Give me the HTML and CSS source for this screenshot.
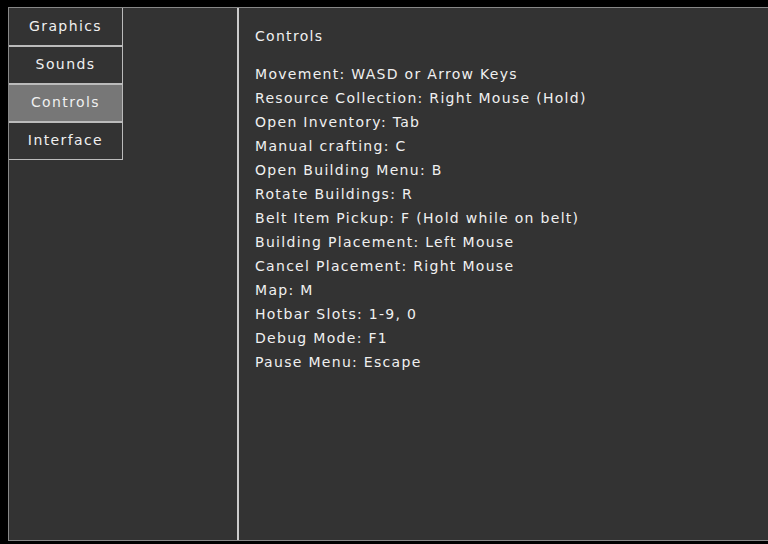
FILE: index.html
```html
<!DOCTYPE html>
<html lang="en">
<head>
    <meta charset="UTF-8">
    <meta name="viewport" content="width=device-width, initial-scale=1.0">
    <title>Settings</title>
    <link rel="stylesheet" href="styles.css">
</head>
<body>
    <div class="settings">
        <div class="tabs">
            <button class="tab">Graphics</button>
            <button class="tab">Sounds</button>
            <button class="tab active">Controls</button>
            <button class="tab">Interface</button>
        </div>
        <div class="content">
            <h2>Controls</h2>
            <p>Movement: WASD or Arrow Keys</p>
            <p>Resource Collection: Right Mouse (Hold)</p>
            <p>Open Inventory: Tab</p>
            <p>Manual crafting: C</p>
            <p>Open Building Menu: B</p>
            <p>Rotate Buildings: R</p>
            <p>Belt Item Pickup: F (Hold while on belt)</p>
            <p>Building Placement: Left Mouse</p>
            <p>Cancel Placement: Right Mouse</p>
            <p>Map: M</p>
            <p>Hotbar Slots: 1-9, 0</p>
            <p>Debug Mode: F1</p>
            <p>Pause Menu: Escape</p>
        </div>
    </div>
</body>
</html>
```

FILE: styles.css
```css
body {
    margin: 0;
    padding: 7px 0 0 8px;
    background-color: #000;
    font-family: 'DejaVu Sans', sans-serif;
    color: #f0f0f0;
    letter-spacing: 1.3px;
    overflow: hidden;
}
.settings {
    display: flex;
    width: 762px;
    height: 532px;
    background-color: #333;
    border: 1px solid #888;
}
.tabs {
    width: 228px;
    display: flex;
    flex-direction: column;
    align-items: flex-start;
    border-right: 2px solid #ccc;
}
.tab {
    width: 114px;
    height: 38px;
    background-color: #333;
    color: #f0f0f0;
    border: 1px solid #bbb;
    border-left: none;
    font-family: 'DejaVu Sans', sans-serif;
    font-size: 14px;
    letter-spacing: 1.4px;
    padding: 0 0 2px;
    cursor: pointer;
}
.tab:first-child {
    border-top: none;
}
.tab.active {
    background-color: #777;
}
.content {
    flex: 1;
    padding: 16px 16px;
    font-size: 14px;
}
.content h2 {
    font-size: 14px;
    font-weight: normal;
    margin: 0 0 14px;
    line-height: 24px;
}
.content p {
    margin: 0;
    line-height: 24px;
}
```
